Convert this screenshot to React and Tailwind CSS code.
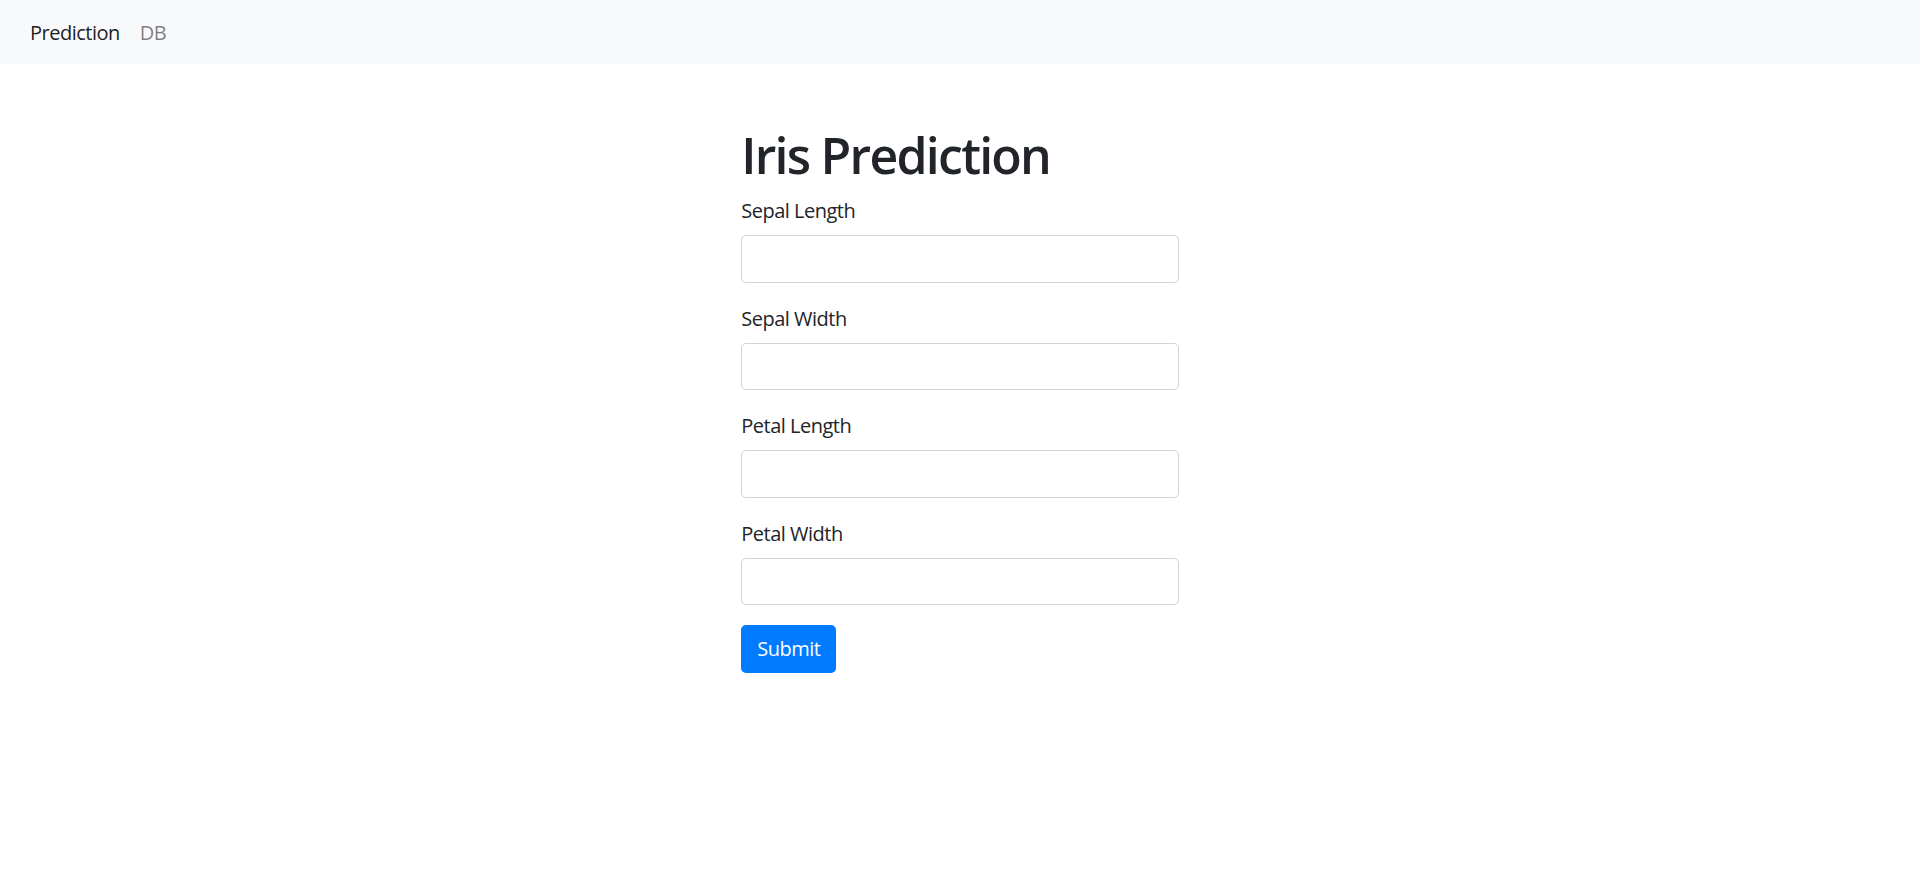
import React from "react";

const fields = ["Sepal Length", "Sepal Width", "Petal Length", "Petal Width"];

export default function App() {
  return (
    <div className="min-h-[893px] bg-white text-[#212529] font-['Open_Sans','Noto_Sans',sans-serif]">
      <nav className="flex h-[64px] items-center bg-[#f8f9fa] px-[20px] pt-[1px]">
        <a className="px-[10px] text-[20px] leading-[30px] tracking-[-0.025em] text-black/90">Prediction</a>
        <a className="px-[10px] text-[20px] leading-[30px] tracking-[-0.025em] text-black/50">DB</a>
      </nav>
      <main className="mx-auto w-[437.5px] pt-[61px]">
        <h1 className="mb-[10px] text-[50px] font-semibold leading-[60px] tracking-[-0.035em]">Iris Prediction</h1>
        <form>
          {fields.map((f) => (
            <div key={f} className="mb-[20px]">
              <label className="mb-[10px] block pt-[1px] text-[20px] leading-[30px] tracking-[-0.025em]">{f}</label>
              <input
                type="text"
                className="-mt-[1px] block h-[47.5px] w-full rounded-[5px] border border-[#ced4da] bg-white px-[15px] text-[20px]"
              />
            </div>
          ))}
          <button
            type="button"
            className="h-[47.5px] rounded-[5px] bg-[#007bff] px-[16px] text-[20px] leading-[30px] tracking-[-0.025em] text-white"
          >
            Submit
          </button>
        </form>
      </main>
    </div>
  );
}
